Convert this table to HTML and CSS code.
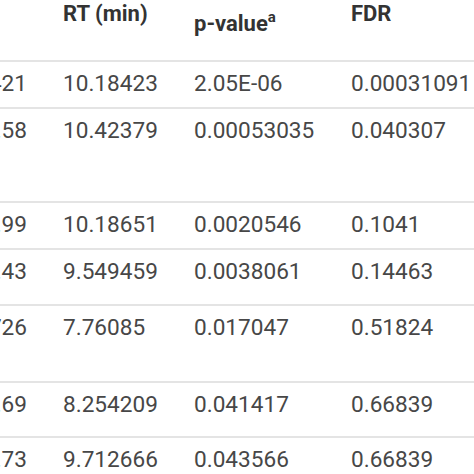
FILE: index.html
```html
<!DOCTYPE html>
<html>
<head>
<meta charset="utf-8">
<link rel="stylesheet" href="styles.css">
</head>
<body>
<div class="table">
  <div class="row head">
    <div class="c c1"></div>
    <div class="c c2">RT (min)</div>
    <div class="c c3 pv">p-value<sup>a</sup></div>
    <div class="c c4">FDR</div>
  </div>
  <div class="row r1">
    <div class="c c1">0.0421</div>
    <div class="c c2">10.18423</div>
    <div class="c c3">2.05E-06</div>
    <div class="c c4">0.00031091</div>
  </div>
  <div class="row r2">
    <div class="c c1">2.58</div>
    <div class="c c2">10.42379</div>
    <div class="c c3">0.00053035</div>
    <div class="c c4">0.040307</div>
  </div>
  <div class="row r3">
    <div class="c c1">1.99</div>
    <div class="c c2">10.18651</div>
    <div class="c c3">0.0020546</div>
    <div class="c c4">0.1041</div>
  </div>
  <div class="row r4">
    <div class="c c1">1.43</div>
    <div class="c c2">9.549459</div>
    <div class="c c3">0.0038061</div>
    <div class="c c4">0.14463</div>
  </div>
  <div class="row r5">
    <div class="c c1">0.0726</div>
    <div class="c c2">7.76085</div>
    <div class="c c3">0.017047</div>
    <div class="c c4">0.51824</div>
  </div>
  <div class="row r6">
    <div class="c c1">0.69</div>
    <div class="c c2">8.254209</div>
    <div class="c c3">0.041417</div>
    <div class="c c4">0.66839</div>
  </div>
  <div class="row r7">
    <div class="c c1">0.73</div>
    <div class="c c2">9.712666</div>
    <div class="c c3">0.043566</div>
    <div class="c c4">0.66839</div>
  </div>
</div>
</body>
</html>
```

FILE: styles.css
```css
html, body {
  margin: 0;
  padding: 0;
  background: #ffffff;
  overflow: hidden;
  width: 474px;
  height: 474px;
}
.table {
  margin-left: -90px;
  width: 600px;
  font-family: Roboto, "Liberation Sans", sans-serif;
  font-size: 22.6px;
  line-height: 26px;
  color: #474747;
}
.row {
  display: grid;
  grid-template-columns: 153px 131px 157px 159px;
  box-sizing: border-box;
  border-top: 2px solid #e4e4e4;
  padding-top: 9px;
}
.c { white-space: nowrap; }
.c1 { text-align: right; padding-right: 36px; }
.head {
  border-top: none;
  padding-top: 1px;
  height: 60px;
  font-size: 22px;
  font-weight: 700;
  color: #333333;
}
.head .pv { padding-top: 10px; }
.head sup {
  font-size: 15px;
  line-height: 0;
  vertical-align: 9px;
}
.r1 { height: 47px; }
.r2 { height: 94px; }
.r3 { height: 47px; }
.r4 { height: 56px; }
.r5 { height: 77px; }
.r6 { height: 55px; }
.r7 { height: 60px; }
```
